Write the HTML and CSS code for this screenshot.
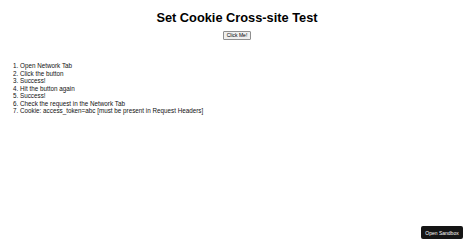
FILE: index.html
```html
<!DOCTYPE html>
<html>
<head>
<meta charset="utf-8">
<link rel="stylesheet" href="styles.css">
</head>
<body>
<main class="page">
  <h1 class="title">Set Cookie Cross-site Test</h1>
  <div class="actions"><button class="btn">Click Me!</button></div>
  <ol class="steps">
    <li>Open Network Tab</li>
    <li>Click the button</li>
    <li>Success!</li>
    <li>Hit the button again</li>
    <li>Success!</li>
    <li>Check the request in the Network Tab</li>
    <li>Cookie: access_token=abc [must be present in Request Headers]</li>
  </ol>
</main>
<a class="sandbox">Open Sandbox</a>
</body>
</html>
```
FILE: styles.css
```css
html, body {
  margin: 0;
  padding: 0;
  background: #fff;
}
body {
  font-family: "Liberation Sans", Arial, sans-serif;
  color: #000;
  width: 474px;
  height: 248px;
  overflow: hidden;
}
.page {
  display: flex;
  flex-direction: column;
}
.title {
  margin: 10px 0 0;
  font-size: 12.8px;
  line-height: 15px;
  font-weight: bold;
  text-align: center;
}
.actions {
  display: flex;
  justify-content: center;
  margin-top: 6px;
}
.btn {
  font-family: "Liberation Sans", Arial, sans-serif;
  font-size: 5px;
  line-height: 5px;
  padding: 1px 3px;
  border: 1px solid #8f8f8f;
  border-radius: 1px;
  background: #efefef;
  color: #000;
}
.steps {
  margin: 22px 0 0;
  padding-left: 13px;
  list-style-position: inside;
  font-size: 6.3px;
  line-height: 7.5px;
  color: #111;
}
.sandbox {
  position: absolute;
  left: 421px;
  top: 226px;
  width: 42px;
  height: 13px;
  background: #151515;
  border-radius: 2px;
  color: #fff;
  font-size: 5px;
  display: flex;
  align-items: center;
  justify-content: center;
}
```
